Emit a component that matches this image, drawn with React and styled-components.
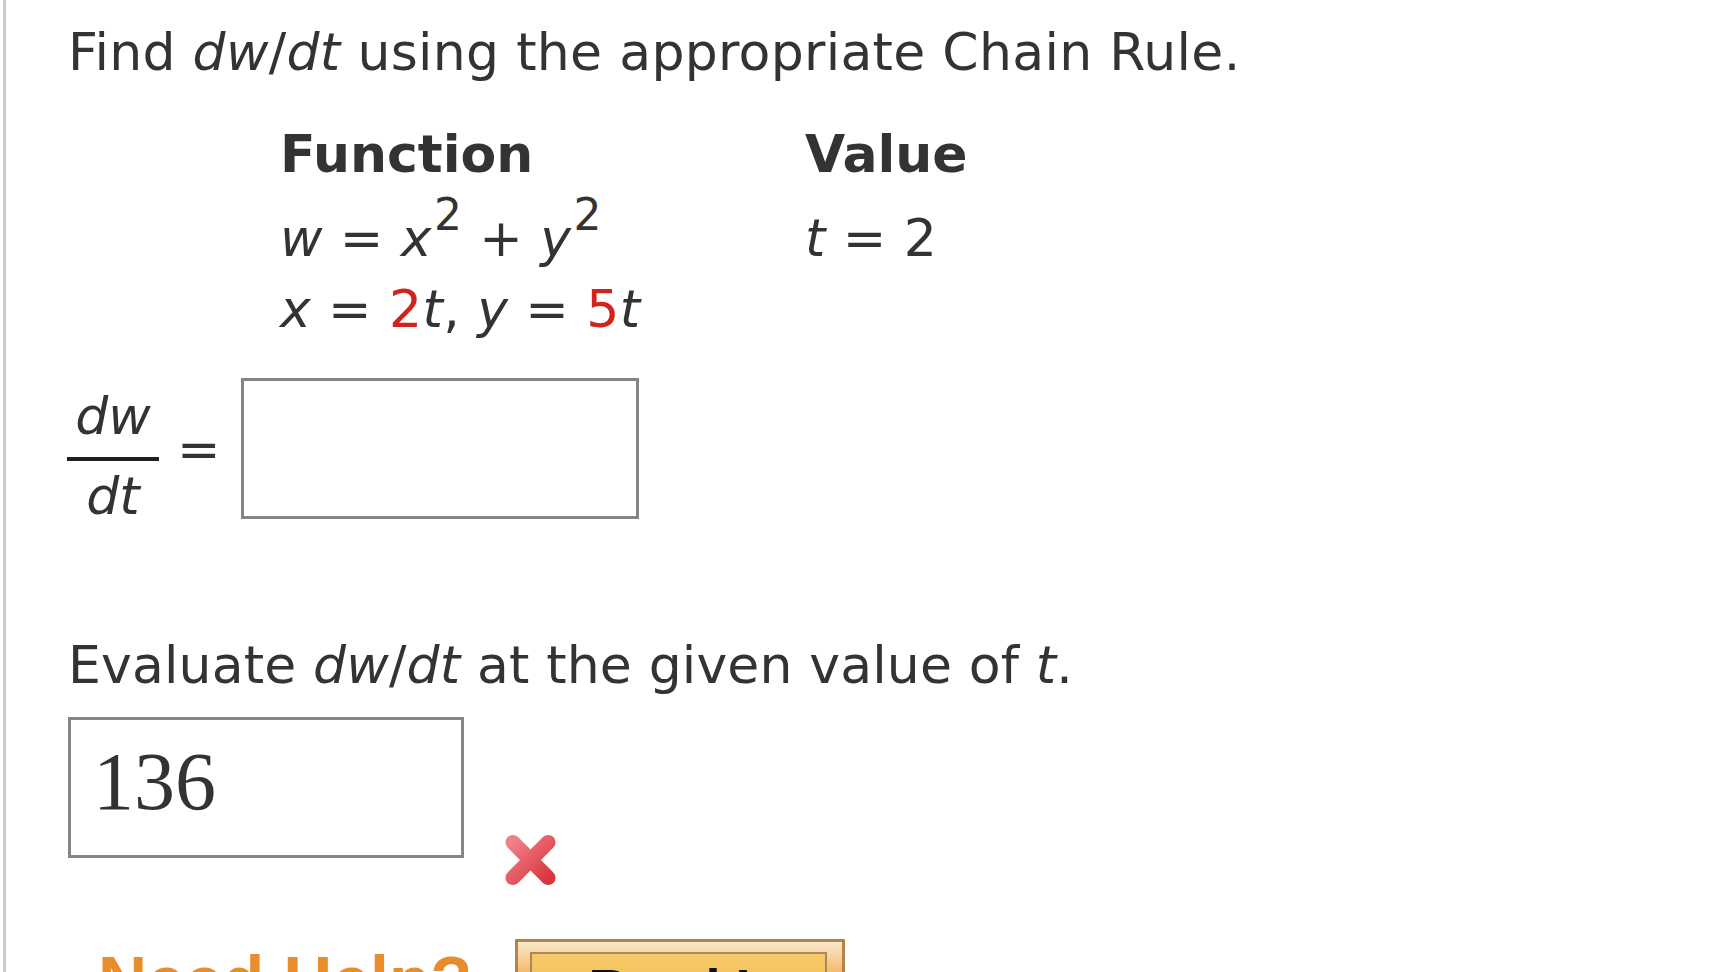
import React from 'react'
import styled, { createGlobalStyle } from 'styled-components'

const GlobalStyle = createGlobalStyle`
  html, body {
    margin: 0;
    padding: 0;
    background: #fff;
  }
  body {
    font-family: 'DejaVu Sans', Verdana, sans-serif;
    color: #333;
    overflow: hidden;
  }
`

const Page = styled.div`
  margin-left: 3px;
  border-left: 3px solid #cbcbcb;
  height: 972px;
  padding: 21px 0 0 62px;
  box-sizing: border-box;
  font-size: 52px;
  line-height: 62px;
`

const Prompt = styled.div`
  white-space: nowrap;
  letter-spacing: 0.3px;
`

const V = styled.span`
  font-style: italic;
`

const Red = styled.span`
  color: #d1231c;
`

const Sup = styled.span`
  font-size: 44px;
  line-height: 0;
  vertical-align: 26px;
  margin-left: 2px;
`

const Given = styled.div`
  margin: 40px 0 0 212px;
  display: grid;
  grid-template-columns: 525px auto;
`

const Head = styled.div`
  font-weight: bold;
  margin-bottom: 18px;
`

const MathLine = styled.div`
  line-height: 71px;
  white-space: nowrap;
  letter-spacing: 0.4px;
`

const AnswerRow = styled.div`
  display: flex;
  align-items: flex-start;
  margin: 33px 0 0 -1px;
`

const Fraction = styled.div`
  display: flex;
  flex-direction: column;
  align-items: center;
  width: 92px;
  margin-top: 12px;
  font-style: italic;
  line-height: 52px;
`

const Num = styled.span`
  padding-bottom: 15px;
`

const Bar = styled.div`
  width: 100%;
  height: 4px;
  background: #1f1f1f;
`

const Den = styled.span`
  padding-top: 9px;
`

const Equals = styled.span`
  margin: 40px 20px 0 18px;
  line-height: 62px;
`

const AnswerBox = styled.div`
  width: ${p => p.$w}px;
  height: 141px;
  border: 3px solid #858585;
  box-sizing: border-box;
  background: #fff;
  display: flex;
  align-items: flex-start;
  padding: ${p => p.$pad || '0'};
`

const Entered = styled.span`
  font-family: 'Liberation Serif', 'Times New Roman', serif;
  font-size: 82px;
  line-height: 80px;
  color: #333;
`

const Evaluate = styled.div`
  margin-top: 112px;
  white-space: nowrap;
  letter-spacing: 0.15px;
`

const ResultRow = styled.div`
  display: flex;
  align-items: flex-start;
  margin-top: 21px;
`

const WrongMark = styled.svg`
  margin: 115px 0 0 39px;
  width: 55px;
  height: 56px;
`

const HelpRow = styled.div`
  display: flex;
  align-items: flex-start;
  margin: 51px 0 0 30px;
`

const HelpLabel = styled.span`
  font-family: 'Liberation Sans', Arial, sans-serif;
  font-weight: bold;
  font-size: 68px;
  line-height: 72px;
  color: #e88c2c;
  margin-top: 5px;
  white-space: nowrap;
`

const HelpButton = styled.div`
  margin-left: 43px;
  width: 330px;
  height: 96px;
  box-sizing: border-box;
  border: 3px solid #b4834b;
  background: linear-gradient(#fbe8cc, #f3b257 40%, #ef9d36);
  padding: 10px 15px 0 12px;
`

const HelpButtonInner = styled.div`
  height: 100%;
  border: 2px solid #a78863;
  border-bottom: none;
  background: linear-gradient(#f6c867, #f2b84c);
  font-family: 'Liberation Sans', Arial, sans-serif;
  font-weight: bold;
  font-size: 54px;
  line-height: 60px;
  color: #111;
  text-align: center;
  padding-top: 4px;
`

export default function App() {
  return (
    <>
      <GlobalStyle />
      <Page>
        <Prompt>
          Find <V>dw</V>/<V>dt</V> using the appropriate Chain Rule.
        </Prompt>

        <Given>
          <Head>Function</Head>
          <Head>Value</Head>
          <MathLine>
            <V>w</V> = <V>x</V><Sup>2</Sup> + <V>y</V><Sup>2</Sup>
          </MathLine>
          <MathLine>
            <V>t</V> = 2
          </MathLine>
          <MathLine>
            <V>x</V> = <Red>2</Red><V>t</V>, <V>y</V> = <Red>5</Red><V>t</V>
          </MathLine>
          <div />
        </Given>

        <AnswerRow>
          <Fraction>
            <Num>dw</Num>
            <Bar />
            <Den>dt</Den>
          </Fraction>
          <Equals>=</Equals>
          <AnswerBox $w={398} />
        </AnswerRow>

        <Evaluate>
          Evaluate <V>dw</V>/<V>dt</V> at the given value of <V>t</V>.
        </Evaluate>

        <ResultRow>
          <AnswerBox $w={396} $pad="22px 0 0 22px">
            <Entered>136</Entered>
          </AnswerBox>
          <WrongMark viewBox="0 0 56 56">
            <defs>
              <linearGradient id="xg" x1="0" y1="0" x2="1" y2="1">
                <stop offset="0" stopColor="#f08088" />
                <stop offset="1" stopColor="#d9363e" />
              </linearGradient>
            </defs>
            <path d="M10 10 L46 46 M46 10 L10 46" stroke="url(#xg)" strokeWidth="15" strokeLinecap="round" fill="none" />
          </WrongMark>
        </ResultRow>

        <HelpRow>
          <HelpLabel>Need Help?</HelpLabel>
          <HelpButton>
            <HelpButtonInner>Read It</HelpButtonInner>
          </HelpButton>
        </HelpRow>
      </Page>
    </>
  )
}
